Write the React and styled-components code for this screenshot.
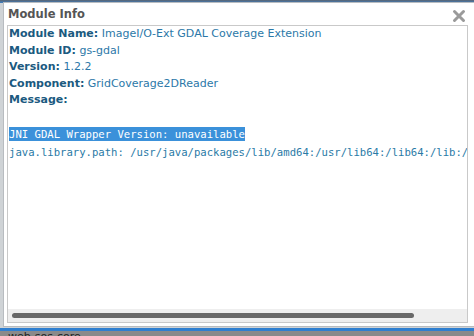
import React from 'react';
import styled, { createGlobalStyle } from 'styled-components';

const GlobalStyle = createGlobalStyle`
  html, body {
    margin: 0;
    padding: 0;
    width: 474px;
    height: 336px;
    overflow: hidden;
    background: #d4d4d4;
    font-family: "DejaVu Sans", sans-serif;
  }
`;

const Page = styled.div`
  position: relative;
  width: 474px;
  height: 336px;
  overflow: hidden;
  display: flex;
  flex-direction: column;
  background: #cfd3d6;
`;

const TopBar = styled.div`
  height: 3px;
  background: linear-gradient(#5a6470, #3d7fc4);
`;

const PageBody = styled.div`
  flex: 1;
  display: flex;
  flex-direction: column;
  justify-content: flex-end;
`;

const BlueStripe = styled.div`
  height: 3px;
  background: #2f7fd0;
`;

const ListRow = styled.div`
  height: 5px;
  background: #8a8a8a;
  color: #222;
  font-size: 11px;
  line-height: 12px;
  padding-left: 8px;
  overflow: hidden;
`;

const Dialog = styled.div`
  position: absolute;
  left: 3px;
  top: 2px;
  width: 490px;
  height: 325px;
  background: #ffffff;
  border: 1px solid #b8bcc0;
  box-sizing: border-box;
  display: flex;
  flex-direction: column;
  padding: 0 0 3px 3px;
`;

const TitleBar = styled.div`
  display: flex;
  align-items: center;
  height: 22px;
  padding: 0 0 0 1px;
  width: 460px;
  box-sizing: border-box;
`;

const Title = styled.div`
  flex: 1;
  font-weight: bold;
  font-size: 11.5px;
  color: #555555;
  padding-bottom: 1px;
`;

const Close = styled.div`
  width: 16px;
  height: 16px;
  margin-top: 3px;
  display: flex;
  align-items: center;
  justify-content: center;
`;

const ContentBox = styled.div`
  width: 461px;
  flex: 1;
  border: 1px solid #c9c9c9;
  box-sizing: border-box;
  display: flex;
  flex-direction: column;
  overflow: hidden;
`;

const Scroll = styled.div`
  flex: 1;
  padding: 0 0 0 1px;
  overflow: hidden;
  white-space: nowrap;
`;

const Field = styled.div`
  font-size: 11px;
  line-height: 16.5px;
  color: #2b78a8;
`;

const Label = styled.span`
  font-weight: bold;
  color: #1b5a80;
`;

const Spacer = styled.div`
  height: 16px;
`;

const Mono = styled.div`
  font-family: "DejaVu Sans Mono", monospace;
  font-size: 10.6px;
  line-height: 18px;
  color: #2a7aa6;
`;

const Selected = styled.span`
  background: #3b91da;
  color: #ffffff;
  padding: 1px 0;
`;

const HScroll = styled.div`
  height: 13px;
  background: #eeeeee;
  display: flex;
  align-items: center;
  padding: 0 4px;
`;

const Thumb = styled.div`
  height: 5px;
  width: 402px;
  border-radius: 3px;
  background: #686868;
`;

export default function App() {
  return (
    <>
      <GlobalStyle />
      <Page>
        <TopBar />
        <PageBody>
          <BlueStripe />
          <ListRow>web-sos-core</ListRow>
        </PageBody>
        <Dialog>
          <TitleBar>
            <Title>Module Info</Title>
            <Close>
              <svg width="14" height="14" viewBox="0 0 14 14">
                <path d="M2.5 2.5 L11.5 11.5 M11.5 2.5 L2.5 11.5" stroke="#9a9a9a" strokeWidth="3" strokeLinecap="round" />
              </svg>
            </Close>
          </TitleBar>
          <ContentBox>
            <Scroll>
              <Field><Label>Module Name:</Label> ImageI/O-Ext GDAL Coverage Extension</Field>
              <Field><Label>Module ID:</Label> gs-gdal</Field>
              <Field><Label>Version:</Label> 1.2.2</Field>
              <Field><Label>Component:</Label> GridCoverage2DReader</Field>
              <Field><Label>Message:</Label></Field>
              <Spacer />
              <Mono><Selected>JNI GDAL Wrapper Version: unavailable</Selected></Mono>
              <Mono>java.library.path: /usr/java/packages/lib/amd64:/usr/lib64:/lib64:/lib:/usr/lib</Mono>
            </Scroll>
            <HScroll>
              <Thumb />
            </HScroll>
          </ContentBox>
        </Dialog>
      </Page>
    </>
  );
}
